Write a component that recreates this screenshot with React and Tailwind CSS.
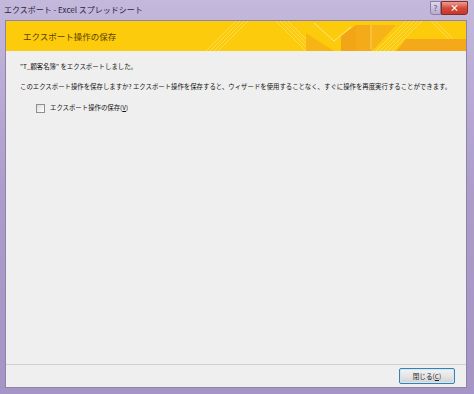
export default function App() {
  const jp = { fontFamily: '"Noto Sans CJK JP", "Noto Sans", sans-serif' };

  return (
    <div
      className="w-[474px] h-[394px] flex flex-col bg-gradient-to-b from-[#c4b8dc] via-[#ab9ccb] to-[#a594c6] overflow-hidden"
      style={jp}
    >
      {/* title bar */}
      <div className="h-[20px] flex items-start justify-between pl-[4px] pr-[6px]">
        <span className="text-[8px] leading-[20px] text-[#2a2438]">
          エクスポート - Excel スプレッドシート
        </span>
        <div className="flex mt-[1px]">
          <div className="w-[11px] h-[14px] rounded-bl-[3px] border border-[#8d7fa8] bg-gradient-to-b from-[#ddd6ea] to-[#b7abcf] text-[8px] leading-[12px] text-center text-[#5a4f70]">
            ?
          </div>
          <div className="w-[27px] h-[14px] rounded-br-[3px] border border-[#8a2a24] bg-gradient-to-b from-[#e89d92] via-[#d6493a] to-[#c5392c] text-[9px] leading-[12px] text-center text-white font-bold">
            ×
          </div>
        </div>
      </div>

      {/* client area */}
      <div className="flex-1 ml-[5px] mr-[7px] mb-[6px] bg-[#efefef] border border-[#8f83a8] flex flex-col">
        {/* yellow header */}
        <div className="relative h-[30px] bg-[#fccb0b] flex items-center pl-[17px] overflow-hidden">
          <span className="relative z-10 text-[8.5px] text-[#5a3d00]">エクスポート操作の保存</span>
          <svg className="absolute right-0 top-0" width="260" height="30" viewBox="0 0 260 30">
            <g stroke="#fde27a" strokeWidth="0.8" opacity="0.8">
              <line x1="0" y1="30" x2="30" y2="0" />
              <line x1="4" y1="30" x2="34" y2="0" />
              <line x1="8" y1="30" x2="38" y2="0" />
              <line x1="12" y1="30" x2="42" y2="0" />
              <line x1="70" y1="0" x2="100" y2="30" />
              <line x1="74" y1="0" x2="104" y2="30" />
              <line x1="78" y1="0" x2="108" y2="30" />
              <line x1="82" y1="0" x2="112" y2="30" />
              <line x1="170" y1="30" x2="200" y2="0" />
              <line x1="174" y1="30" x2="204" y2="0" />
              <line x1="178" y1="30" x2="208" y2="0" />
              <line x1="182" y1="30" x2="212" y2="0" />
              <line x1="186" y1="30" x2="216" y2="0" />
              <line x1="225" y1="0" x2="255" y2="30" />
              <line x1="229" y1="0" x2="259" y2="30" />
            </g>
            <polygon points="100,12 128,30 100,30" fill="#f7b515" />
            <polygon points="135,15 150,4 150,30 135,30" fill="#f2a516" />
            <polygon points="150,4 165,4 165,30 150,30" fill="#f3ab1a" />
            <polygon points="165,4 190,4 170,26 165,30" fill="#f5b11c" opacity="0.9" />
            <polygon points="200,18 260,18 260,30 190,30" fill="#f4a91a" />
            <polyline points="108,2 128,20 145,6" fill="none" stroke="#fde68a" strokeWidth="1" />
            <polyline points="165,4 165,28" fill="none" stroke="#fbd35a" strokeWidth="1" />
          </svg>
        </div>

        {/* body */}
        <div className="flex-1 px-[14px] pt-[11px] text-[6.4px] text-[#111]">
          <p className="leading-[10px]">"T_顧客名簿" をエクスポートしました。</p>
          <p className="mt-[10px] leading-[10px] whitespace-nowrap">
            このエクスポート操作を保存しますか? エクスポート操作を保存すると、ウィザードを使用することなく、すぐに操作を再度実行することができます。
          </p>
          <label className="mt-[11px] ml-[16px] flex items-center gap-[5px]">
            <span className="w-[9px] h-[9px] border border-[#8e8f8f] bg-gradient-to-br from-[#dcdcdc] to-[#ffffff]" />
            <span className="leading-[10px]">
              エクスポート操作の保存(<span className="underline">V</span>)
            </span>
          </label>
        </div>

        {/* footer */}
        <div className="border-t border-[#d0d0d0] h-[23px] flex items-center justify-end pr-[11px]">
          <button className="w-[56px] h-[16px] rounded-[2px] border border-[#3c7fb1] bg-gradient-to-b from-[#f2f2f2] via-[#e6e6e6] to-[#d2d2d2] text-[6.6px] leading-[14px] text-[#1e1e1e] shadow-[inset_0_0_0_1px_#cfe8f7]">
            閉じる(<span className="underline">C</span>)
          </button>
        </div>
      </div>
    </div>
  );
}
